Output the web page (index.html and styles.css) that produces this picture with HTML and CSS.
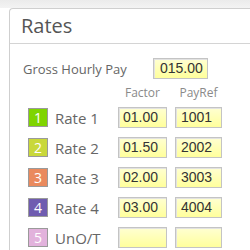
FILE: index.html
```html
<!DOCTYPE html>
<html>
<head>
<meta charset="utf-8">
<link rel="stylesheet" href="styles.css">
</head>
<body>
<div class="panel">
  <div class="panel-head">Rates</div>
  <div class="panel-body">
    <div class="gross-row">
      <span class="gross-label">Gross Hourly Pay</span>
      <span class="field gross-field">015.00</span>
    </div>
    <div class="col-heads">
      <span class="col-head factor-col">Factor</span>
      <span class="col-head payref-col">PayRef</span>
    </div>
    <div class="rate-row">
      <span class="rate-label"><span class="badge b1">1</span>Rate 1</span>
      <span class="field factor-col">01.00</span>
      <span class="field payref-col">1001</span>
    </div>
    <div class="rate-row">
      <span class="rate-label"><span class="badge b2">2</span>Rate 2</span>
      <span class="field factor-col">01.50</span>
      <span class="field payref-col">2002</span>
    </div>
    <div class="rate-row">
      <span class="rate-label"><span class="badge b3">3</span>Rate 3</span>
      <span class="field factor-col">02.00</span>
      <span class="field payref-col">3003</span>
    </div>
    <div class="rate-row">
      <span class="rate-label"><span class="badge b4">4</span>Rate 4</span>
      <span class="field factor-col">03.00</span>
      <span class="field payref-col">4004</span>
    </div>
    <div class="rate-row">
      <span class="rate-label"><span class="badge b5">5</span>UnO/T</span>
      <span class="field factor-col"></span>
      <span class="field payref-col"></span>
    </div>
  </div>
</div>
</body>
</html>
```
FILE: styles.css
```css
html {
  background: linear-gradient(#ebebeb 0, #f3f3f3 8px, #ffffff 8px);
}
body {
  margin: 0;
  overflow: hidden;
  font-family: "Open Sans", "Liberation Sans", sans-serif;
  color: #666;
}
.panel {
  box-sizing: border-box;
  margin: 8px 0 0 9px;
  width: 241px;
  height: 242px;
  background: #fff;
  border: 1px solid #cfcfcf;
  border-right: none;
  border-bottom: none;
  border-radius: 4px 0 0 0;
}
.panel-head {
  height: 34px;
  line-height: 34px;
  padding-left: 11px;
  font-size: 20px;
  font-weight: 500;
  color: #555;
  border-bottom: 1px solid #d4d4d4;
}
.panel-body {
  padding-top: 14px;
}
.gross-row {
  display: flex;
  align-items: center;
  height: 21px;
  padding-left: 13px;
}
.gross-label {
  width: 130px;
  font-size: 13px;
  color: #666;
}
.field {
  box-sizing: border-box;
  height: 21px;
  line-height: 19px;
  padding: 0 5px;
  font-family: "Liberation Sans", Arial, sans-serif;
  font-size: 14px;
  color: #333;
  background: linear-gradient(#ffffd2, #ffff9c);
  border: 1px solid #c4c4c4;
  box-shadow: inset 1px 1px 0 #e2e2e2;
}
.gross-field {
  width: 55px;
  padding-left: 6px;
}
.col-heads {
  display: flex;
  margin-top: 6px;
  height: 16px;
  line-height: 16px;
  padding-left: 108px;
  gap: 8px;
}
.col-head {
  font-size: 12px;
  color: #8a8a8a;
  text-align: center;
}
.factor-col {
  width: 49px;
}
.payref-col {
  width: 47px;
}
.rate-row {
  display: flex;
  align-items: center;
  gap: 8px;
  margin-top: 6px;
  padding-left: 18px;
}
.rate-row + .rate-row {
  margin-top: 9px;
}
.rate-label {
  width: 82px;
  display: flex;
  align-items: center;
  gap: 7px;
  font-size: 15px;
  color: #666;
}
.rate-row .factor-col {
  padding-left: 4px;
}
.badge {
  box-sizing: border-box;
  width: 20px;
  height: 19px;
  line-height: 17px;
  text-align: center;
  font-size: 14px;
  color: #fff;
  border: 1px solid #9a9a9a;
}
.b1 { background: #7fd400; }
.b2 { background: #c9d83a; }
.b3 { background: #ea8a5e; }
.b4 { background: #6f5cb0; }
.b5 { background: #e2b2dc; }
```
